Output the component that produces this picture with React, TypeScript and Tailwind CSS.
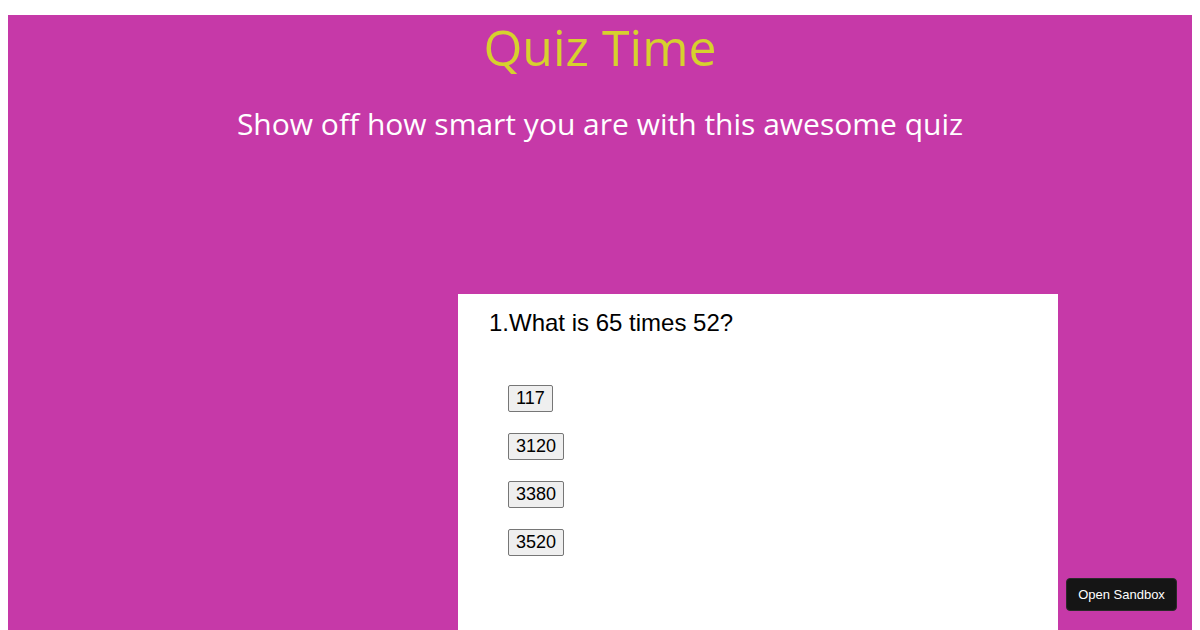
export default function App() {
  const answers = ["117", "3120", "3380", "3520"];
  return (
    <div className="w-[1200px] h-[630px] overflow-hidden bg-white relative">
      <div className="mx-2 mt-[15px] h-[615px] bg-[#c639a8] flex flex-col font-['Open_Sans',sans-serif]">
        <h1 className="text-center text-[50px] leading-[64px] text-[#d6d12e]">Quiz Time</h1>
        <p className="text-center text-[30px] leading-[44px] text-white mt-[23px]">
          Show off how smart you are with this awesome quiz
        </p>
        <div className="ml-[450px] mt-[148px] w-[600px] flex-1 bg-white pl-[31px] pt-[15px] font-['Liberation_Sans',Arial,sans-serif]">
          <div className="text-[24px] leading-[28px] text-black">1.What is 65 times 52?</div>
          <div className="flex flex-col items-start gap-[21px] mt-[48px] pl-[19px]">
            {answers.map((a) => (
              <button
                key={a}
                className="h-[27px] px-[7px] text-[18px] leading-[21px] text-black bg-[#efefef] border border-[#767676] rounded-[2px] font-['Liberation_Sans',Arial,sans-serif]"
              >
                {a}
              </button>
            ))}
          </div>
        </div>
      </div>
      <div className="absolute right-[23px] bottom-[19px] w-[111px] h-[33px] rounded-[4px] bg-[#151515] border border-[#2a2a2a] text-white text-[13px] flex items-center justify-center font-['Liberation_Sans',Arial,sans-serif]">
        Open Sandbox
      </div>
    </div>
  );
}
